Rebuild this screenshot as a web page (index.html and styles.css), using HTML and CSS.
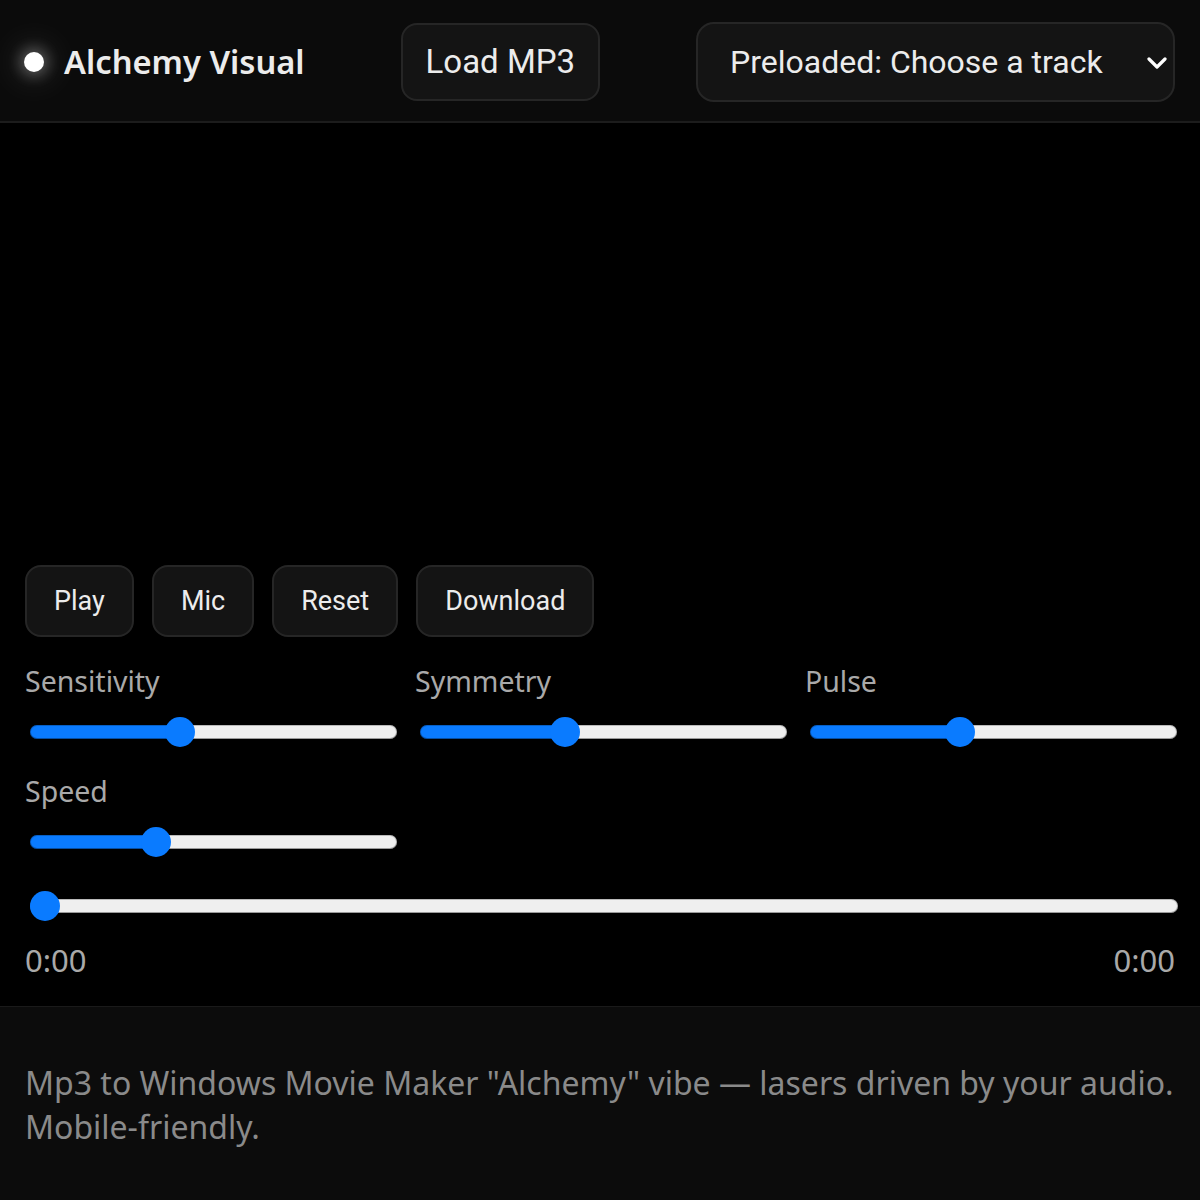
FILE: index.html
```html
<!DOCTYPE html>
<html lang="en">
<head>
<meta charset="utf-8">
<title>Alchemy Visual</title>
<link rel="stylesheet" href="styles.css">
</head>
<body>
<header class="topbar">
  <div class="brand">
    <span class="brand-dot"></span>
    <h1 class="brand-title">Alchemy Visual</h1>
  </div>
  <button class="btn btn-lg" type="button">Load MP3</button>
  <div class="select-wrap">
    <select class="track-select">
      <option>Preloaded: Choose a track</option>
    </select>
    <svg class="select-chevron" width="20" height="14" viewBox="0 0 20 14" aria-hidden="true">
      <polyline points="2,3 10,11 18,3" fill="none" stroke="#fff" stroke-width="3.2" stroke-linecap="round" stroke-linejoin="round"/>
    </svg>
  </div>
</header>

<main class="stage">
  <canvas class="visual" width="1200" height="422"></canvas>

  <section class="controls">
    <div class="actions">
      <button class="btn" type="button">Play</button>
      <button class="btn" type="button">Mic</button>
      <button class="btn" type="button">Reset</button>
      <button class="btn" type="button">Download</button>
    </div>

    <div class="params">
      <label class="param">
        <span class="param-label">Sensitivity</span>
        <input class="range" type="range" min="0" max="100" step="0.5" value="40" style="--v:0.4">
      </label>
      <label class="param">
        <span class="param-label">Symmetry</span>
        <input class="range" type="range" min="0" max="100" step="0.5" value="38.5" style="--v:0.385">
      </label>
      <label class="param">
        <span class="param-label">Pulse</span>
        <input class="range" type="range" min="0" max="100" step="0.5" value="40" style="--v:0.4">
      </label>
      <label class="param">
        <span class="param-label">Speed</span>
        <input class="range" type="range" min="0" max="100" step="0.5" value="33" style="--v:0.33">
      </label>
    </div>

    <input class="range seek" type="range" min="0" max="100" step="0.1" value="0" style="--v:0">

    <div class="times">
      <span>0:00</span>
      <span>0:00</span>
    </div>
  </section>
</main>

<footer class="footer">
  <p>Mp3 to Windows Movie Maker "Alchemy" vibe — lasers driven by your audio. Mobile-friendly.</p>
</footer>
</body>
</html>
```

FILE: styles.css
```css
* {
  box-sizing: border-box;
}

html,
body {
  margin: 0;
  background: #000;
}

body {
  font-family: "Noto Sans", "Open Sans", sans-serif;
  color: #eee;
}

/* top bar */
.topbar {
  height: 123px;
  display: flex;
  align-items: center;
  justify-content: space-between;
  padding: 2px 25px 0 24px;
  background: #0b0b0b;
  border-bottom: 2px solid #1c1c1c;
}

.brand {
  display: flex;
  align-items: center;
  gap: 20px;
}

.brand-dot {
  width: 20px;
  height: 20px;
  border-radius: 50%;
  background: #fff;
  box-shadow: 0 0 14px 4px rgba(255, 255, 255, 0.28), 0 0 34px 10px rgba(255, 255, 255, 0.1);
}

.brand-title {
  margin: 0;
  font-size: 32.7px;
  font-weight: 600;
  color: #ececec;
}

/* buttons */
.btn {
  font-family: Roboto, "Liberation Sans", sans-serif;
  font-size: 27px;
  color: #ececec;
  background: #141414;
  border: 2px solid #262626;
  border-radius: 16px;
  height: 72px;
  padding: 0 27px;
  cursor: pointer;
}

.btn-lg {
  font-size: 33px;
  height: 78px;
  padding: 0 23px;
}

.select-wrap {
  position: relative;
}

.track-select {
  appearance: none;
  -webkit-appearance: none;
  width: 479px;
  height: 80px;
  padding: 0 60px 0 32px;
  font-family: Roboto, "Liberation Sans", sans-serif;
  font-size: 32px;
  color: #ececec;
  background: #141414;
  border: 2px solid #262626;
  border-radius: 18px;
}

.select-chevron {
  position: absolute;
  right: 8px;
  top: 34px;
  pointer-events: none;
}

/* visual area */
.visual {
  display: block;
  width: 100%;
  height: 422px;
  background: #000;
}

.controls {
  padding: 20px 25px 26px;
}

.actions {
  display: flex;
  gap: 18px;
}

.params {
  display: grid;
  grid-template-columns: repeat(3, 1fr);
  column-gap: 20px;
  row-gap: 25px;
  margin-top: 25px;
}

.param {
  display: flex;
  flex-direction: column;
  gap: 15px;
}

.param-label {
  font-size: 28.5px;
  line-height: 40px;
  margin-top: -1px;
  margin-bottom: 1px;
  color: #a9a9a9;
}

/* range sliders */
.range {
  --fill: calc(15px + var(--v) * (100% - 30px));
  -webkit-appearance: none;
  appearance: none;
  display: block;
  width: calc(100% - 3px);
  height: 30px;
  margin: 0 0 0 5px;
  background: transparent;
}

.range::-webkit-slider-runnable-track {
  height: 14px;
  border-radius: 7px;
  background: linear-gradient(to right, #0a7bff 0, #0a7bff var(--fill), #efefef var(--fill), #efefef 100%);
  box-shadow: inset 0 0 0 1px rgba(0, 0, 0, 0.22), inset 0 -1px 0 rgba(0, 0, 0, 0.18);
}

.range::-webkit-slider-thumb {
  -webkit-appearance: none;
  appearance: none;
  width: 30px;
  height: 30px;
  margin-top: -8px;
  border-radius: 50%;
  background: #0a7bff;
  border: none;
}

.seek {
  width: calc(100% - 2px);
  margin-top: 34px;
}

.times {
  display: flex;
  justify-content: space-between;
  margin-top: 19px;
  font-size: 31px;
  line-height: 40px;
  color: #a9a9a9;
}

/* footer */
.footer {
  background: #0c0c0c;
  border-top: 1px solid #1a1a1a;
  padding: 54px 10px 40px 25px;
  min-height: 194px;
}

.footer p {
  margin: 0;
  font-size: 32px;
  line-height: 44px;
  color: #8a8a8a;
}
```
